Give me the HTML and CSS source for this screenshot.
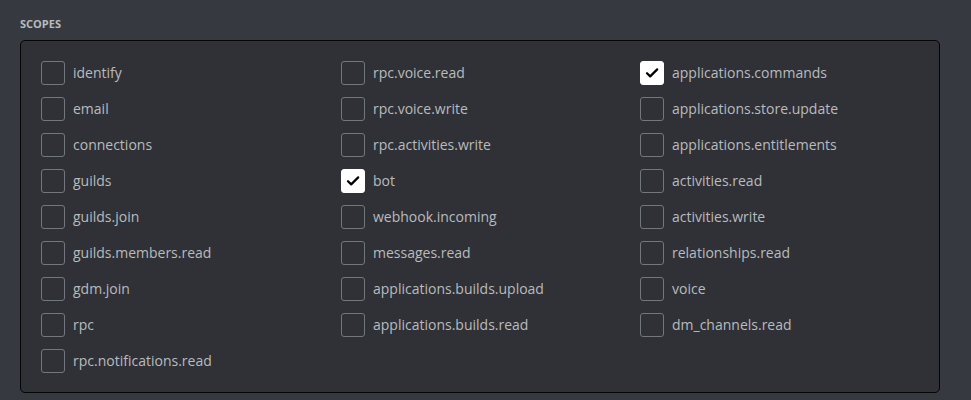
FILE: index.html
```html
<!DOCTYPE html>
<html>
<head>
<meta charset="utf-8">
<link rel="stylesheet" href="styles.css">
</head>
<body>
<div class="page">
  <h5 class="label">Scopes</h5>
  <div class="panel">
    <div class="grid">
      <label class="item"><span class="box"></span><span class="text">identify</span></label>
      <label class="item"><span class="box"></span><span class="text">rpc.voice.read</span></label>
      <label class="item"><span class="box checked"><svg viewBox="0 0 24 24" width="24" height="24"><path d="M7 12.2l3.2 3.2L17.2 8.4" fill="none" stroke="#000" stroke-width="2.2" stroke-linecap="round" stroke-linejoin="round"/></svg></span><span class="text">applications.commands</span></label>

      <label class="item"><span class="box"></span><span class="text">email</span></label>
      <label class="item"><span class="box"></span><span class="text">rpc.voice.write</span></label>
      <label class="item"><span class="box"></span><span class="text">applications.store.update</span></label>

      <label class="item"><span class="box"></span><span class="text">connections</span></label>
      <label class="item"><span class="box"></span><span class="text">rpc.activities.write</span></label>
      <label class="item"><span class="box"></span><span class="text">applications.entitlements</span></label>

      <label class="item"><span class="box"></span><span class="text">guilds</span></label>
      <label class="item"><span class="box checked"><svg viewBox="0 0 24 24" width="24" height="24"><path d="M7 12.2l3.2 3.2L17.2 8.4" fill="none" stroke="#000" stroke-width="2.2" stroke-linecap="round" stroke-linejoin="round"/></svg></span><span class="text">bot</span></label>
      <label class="item"><span class="box"></span><span class="text">activities.read</span></label>

      <label class="item"><span class="box"></span><span class="text">guilds.join</span></label>
      <label class="item"><span class="box"></span><span class="text">webhook.incoming</span></label>
      <label class="item"><span class="box"></span><span class="text">activities.write</span></label>

      <label class="item"><span class="box"></span><span class="text">guilds.members.read</span></label>
      <label class="item"><span class="box"></span><span class="text">messages.read</span></label>
      <label class="item"><span class="box"></span><span class="text">relationships.read</span></label>

      <label class="item"><span class="box"></span><span class="text">gdm.join</span></label>
      <label class="item"><span class="box"></span><span class="text">applications.builds.upload</span></label>
      <label class="item"><span class="box"></span><span class="text">voice</span></label>

      <label class="item"><span class="box"></span><span class="text">rpc</span></label>
      <label class="item"><span class="box"></span><span class="text">applications.builds.read</span></label>
      <label class="item"><span class="box"></span><span class="text">dm_channels.read</span></label>

      <label class="item"><span class="box"></span><span class="text">rpc.notifications.read</span></label>
    </div>
  </div>
</div>
</body>
</html>
```

FILE: styles.css
```css
html, body {
  margin: 0;
  padding: 0;
  background: #36393f;
  font-family: "Open Sans", "Noto Sans", sans-serif;
}
.page {
  padding: 17px 31px 0 20px;
}
.label {
  margin: 0 0 9px 0;
  font-size: 11px;
  line-height: 14px;
  font-weight: 700;
  text-transform: uppercase;
  color: #b9bbbe;
  letter-spacing: 0;
}
.panel {
  background: #2f3136;
  border: 1px solid #050506;
  border-radius: 5px;
  padding: 20px 0 19px 20px;
}
.grid {
  display: grid;
  grid-template-columns: 300px 299px 1fr;
  row-gap: 12px;
}
.item {
  display: flex;
  align-items: center;
  gap: 8px;
  height: 24px;
}
.box {
  box-sizing: border-box;
  width: 24px;
  height: 24px;
  border: 1px solid #72767d;
  border-radius: 3px;
  flex: none;
  display: flex;
}
.box.checked {
  background: #fff;
  border-color: #fff;
}
.box svg {
  display: block;
  margin: -1px;
}
.text {
  font-size: 14px;
  line-height: 18px;
  color: #b9bbbe;
}
```
